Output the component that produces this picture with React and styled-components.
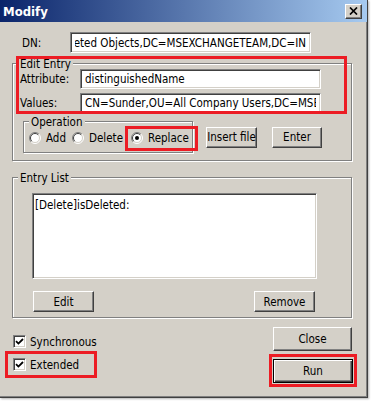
import React from 'react';
import styled, { createGlobalStyle } from 'styled-components';

const GlobalStyle = createGlobalStyle`
  html, body {
    margin: 0;
    padding: 0;
    background: #ffffff;
  }
  body {
    width: 371px;
    height: 401px;
    overflow: hidden;
  }
`;

const FONT = `"DejaVu Sans Condensed", "DejaVu Sans", Tahoma, sans-serif`;
const FACE = '#d4d0c8';
const RED = '#ec1c24';

const Window = styled.div`
  box-sizing: border-box;
  width: 368px;
  height: 398px;
  background: ${FACE};
  border-right: 1px solid #404040;
  border-bottom: 1px solid #404040;
  box-shadow: inset -1px -1px 0 #808080, 1px 1px 2px rgba(0, 0, 0, 0.3);
  display: flex;
  flex-direction: column;
  font-family: ${FONT};
  font-stretch: condensed;
  font-size: 11.5px;
  color: #000;
`;

const TitleBar = styled.div`
  flex: none;
  height: 22px;
  display: flex;
  align-items: center;
  justify-content: space-between;
  padding: 0 5px 0 3px;
  background: linear-gradient(90deg, #0a246a 0%, #a6caf0 100%);
`;

const Title = styled.span`
  color: #fff;
  font-weight: bold;
  font-size: 13px;
`;

const CloseBox = styled.div`
  box-sizing: border-box;
  width: 17px;
  height: 15px;
  background: ${FACE};
  border: 1px solid;
  border-color: #fff #404040 #404040 #fff;
  box-shadow: inset -1px -1px 0 #808080;
  display: flex;
  align-items: center;
  justify-content: center;
`;

const Body = styled.div`
  flex: 1;
  display: flex;
  flex-direction: column;
  padding: 10px 14px 0 12px;
`;

const DnRow = styled.div`
  display: flex;
  align-items: center;
  padding-left: 10px;
`;

const Label = styled.span`
  flex: none;
  width: ${(p) => p.$w}px;
  white-space: nowrap;
`;

const Field = styled.div`
  box-sizing: border-box;
  flex: none;
  width: ${(p) => p.$w || 241}px;
  height: ${(p) => p.$h || 21}px;
  background: #fff;
  border: 1px solid;
  border-color: #808080 #fff #fff #808080;
  box-shadow: inset 1px 1px 0 #404040, inset -1px -1px 0 ${FACE};
  padding: 0 4px;
  display: flex;
  align-items: center;
`;

const FieldText = styled.div`
  flex: 1;
  display: flex;
  justify-content: ${(p) => (p.$end ? 'flex-end' : 'flex-start')};
  overflow: hidden;
  white-space: nowrap;
`;

const Group = styled.div`
  position: relative;
  box-sizing: border-box;
  width: ${(p) => (p.$w ? `${p.$w}px` : 'auto')};
  margin-top: ${(p) => p.$mt || 0}px;
  margin-right: ${(p) => (p.$w ? 0 : 1)}px;
  border: 1px solid #808080;
  box-shadow: 1px 1px 0 #fff, inset 1px 1px 0 #fff;
  padding: ${(p) => p.$pad};
`;

const Legend = styled.span`
  position: absolute;
  top: -6px;
  left: 5px;
  padding: 0 2px;
  line-height: 13px;
  background: ${FACE};
  white-space: nowrap;
`;

const FormRow = styled.div`
  display: flex;
  align-items: center;
  margin-top: ${(p) => p.$mt || 0}px;
`;

const OperationRow = styled.div`
  display: flex;
  align-items: center;
  margin: 8px 0 0 3px;
`;

const Radios = styled.div`
  display: flex;
  align-items: center;
  height: 13px;
`;

const RadioItem = styled.label`
  position: relative;
  flex: none;
  width: ${(p) => (p.$w ? `${p.$w}px` : 'auto')};
  display: flex;
  align-items: center;
  gap: 5px;
  height: 13px;
  white-space: nowrap;
`;

const Button = styled.button`
  position: relative;
  box-sizing: border-box;
  flex: none;
  width: ${(p) => p.$w}px;
  height: ${(p) => p.$h || 21}px;
  margin-left: ${(p) => p.$ml || 0}px;
  padding: 0;
  font: inherit;
  color: #000;
  white-space: nowrap;
  background: ${FACE};
  border: 1px solid;
  border-color: ${(p) => (p.$default ? '#000' : '#fff #404040 #404040 #fff')};
  box-shadow: ${(p) =>
    p.$default
      ? 'inset 1px 1px 0 #fff, inset -1px -1px 0 #404040, inset -2px -2px 0 #808080'
      : `inset -1px -1px 0 #808080, inset 1px 1px 0 ${FACE}`};
`;

const ListBox = styled.div`
  box-sizing: border-box;
  width: 285px;
  height: 86px;
  background: #fff;
  border: 1px solid;
  border-color: #808080 #fff #fff #808080;
  box-shadow: inset 1px 1px 0 #404040, inset -1px -1px 0 ${FACE};
  padding: 4px 2px;
  line-height: 14px;
`;

const ListButtons = styled.div`
  width: 282px;
  display: flex;
  justify-content: space-between;
  margin: 12px 0 0 1px;
`;

const Footer = styled.div`
  display: flex;
  justify-content: space-between;
  margin-top: 9px;
`;

const Checks = styled.div`
  display: flex;
  flex-direction: column;
  gap: 10px;
  padding: 8px 0 0 1px;
`;

const CheckItem = styled.label`
  position: relative;
  align-self: flex-start;
  display: flex;
  align-items: center;
  gap: 4px;
  height: 13px;
  white-space: nowrap;
`;

const CheckBox = styled.span`
  box-sizing: border-box;
  width: 13px;
  height: 13px;
  background: #fff;
  border: 1px solid;
  border-color: #808080 #fff #fff #808080;
  box-shadow: inset 1px 1px 0 #404040, inset -1px -1px 0 ${FACE};
  display: flex;
  align-items: center;
  justify-content: center;
`;

const Actions = styled.div`
  display: flex;
  flex-direction: column;
  align-items: flex-end;
  gap: 8px;
`;

const Mark = styled.span`
  position: absolute;
  inset: ${(p) => p.$inset};
  box-sizing: border-box;
  border: 3px solid ${RED};
  pointer-events: none;
`;

const Radio = ({ checked }) => (
  <svg width="12" height="12" viewBox="0 0 12 12">
    <circle cx="6" cy="6" r="5" fill="#fff" />
    <path d="M9.9 2.1 A5.5 5.5 0 0 0 2.1 9.9" fill="none" stroke="#808080" strokeWidth="1" />
    <path d="M9.9 2.1 A5.5 5.5 0 0 1 2.1 9.9" fill="none" stroke="#fff" strokeWidth="1" />
    <path d="M9.2 2.8 A4.5 4.5 0 0 0 2.8 9.2" fill="none" stroke="#404040" strokeWidth="1" />
    <path d="M9.2 2.8 A4.5 4.5 0 0 1 2.8 9.2" fill="none" stroke={FACE} strokeWidth="1" />
    {checked && <circle cx="6" cy="6" r="2" fill="#000" />}
  </svg>
);

const Check = () => (
  <svg width="9" height="9" viewBox="0 0 9 9">
    <path d="M1 4.2 L3.4 6.6 L8 2" fill="none" stroke="#000" strokeWidth="1.8" />
  </svg>
);

const CloseGlyph = () => (
  <svg width="9" height="8" viewBox="0 0 9 8">
    <path d="M1 0.5 L8 7.5 M8 0.5 L1 7.5" stroke="#000" strokeWidth="1.7" />
  </svg>
);

const App = () => {
  return (
    <>
      <GlobalStyle />
      <Window>
        <TitleBar>
          <Title>Modify</Title>
          <CloseBox>
            <CloseGlyph />
          </CloseBox>
        </TitleBar>

        <Body>
          <DnRow>
            <Label $w={48}>DN:</Label>
            <Field>
              <FieldText $end>
                <span>CN=Deleted Objects,DC=MSEXCHANGETEAM,DC=IN</span>
              </FieldText>
            </Field>
          </DnRow>

          <Group $mt={10} $pad="5px 0 7px 7px">
            <Legend>Edit Entry</Legend>
            <FormRow>
              <Label $w={60}>Attribute:</Label>
              <Field $h={20}>
                <FieldText>distinguishedName</FieldText>
              </Field>
            </FormRow>
            <FormRow $mt={4}>
              <Label $w={60}>Values:</Label>
              <Field $h={20}>
                <FieldText>CN=Sunder,OU=All Company Users,DC=MSEXCHANGETEAM,DC=IN</FieldText>
              </Field>
            </FormRow>

            <OperationRow>
              <Group $w={170} $pad="9px 0 8px 5px">
                <Legend>Operation</Legend>
                <Radios>
                  <RadioItem $w={43}>
                    <Radio />
                    Add
                  </RadioItem>
                  <RadioItem $w={59}>
                    <Radio />
                    Delete
                  </RadioItem>
                  <RadioItem>
                    <Radio checked />
                    Replace
                    <Mark $inset="-5px -9px -7px -6px" />
                  </RadioItem>
                </Radios>
              </Group>
              <Button $w={51} $ml={13}>Insert file</Button>
              <Button $w={50} $ml={15}>Enter</Button>
            </OperationRow>

            <Mark $inset="-8px 4px 46px 3px" />
          </Group>

          <Group $mt={16} $pad="15px 0 5px 19px">
            <Legend>Entry List</Legend>
            <ListBox>[Delete]isDeleted:</ListBox>
            <ListButtons>
              <Button $w={61}>Edit</Button>
              <Button $w={61}>Remove</Button>
            </ListButtons>
          </Group>

          <Footer>
            <Checks>
              <CheckItem>
                <CheckBox>
                  <Check />
                </CheckBox>
                Synchronous
              </CheckItem>
              <CheckItem>
                <CheckBox>
                  <Check />
                </CheckBox>
                Extended
                <Mark $inset="-7px -18px -7px -8px" />
              </CheckItem>
            </Checks>
            <Actions>
              <Button $w={79} $h={24} style={{ marginRight: 1 }}>
                Close
              </Button>
              <Button $w={80} $h={24} $default>
                Run
                <Mark $inset="-6px -5px -5px -5px" />
              </Button>
            </Actions>
          </Footer>
        </Body>
      </Window>
    </>
  );
};

export default App;
